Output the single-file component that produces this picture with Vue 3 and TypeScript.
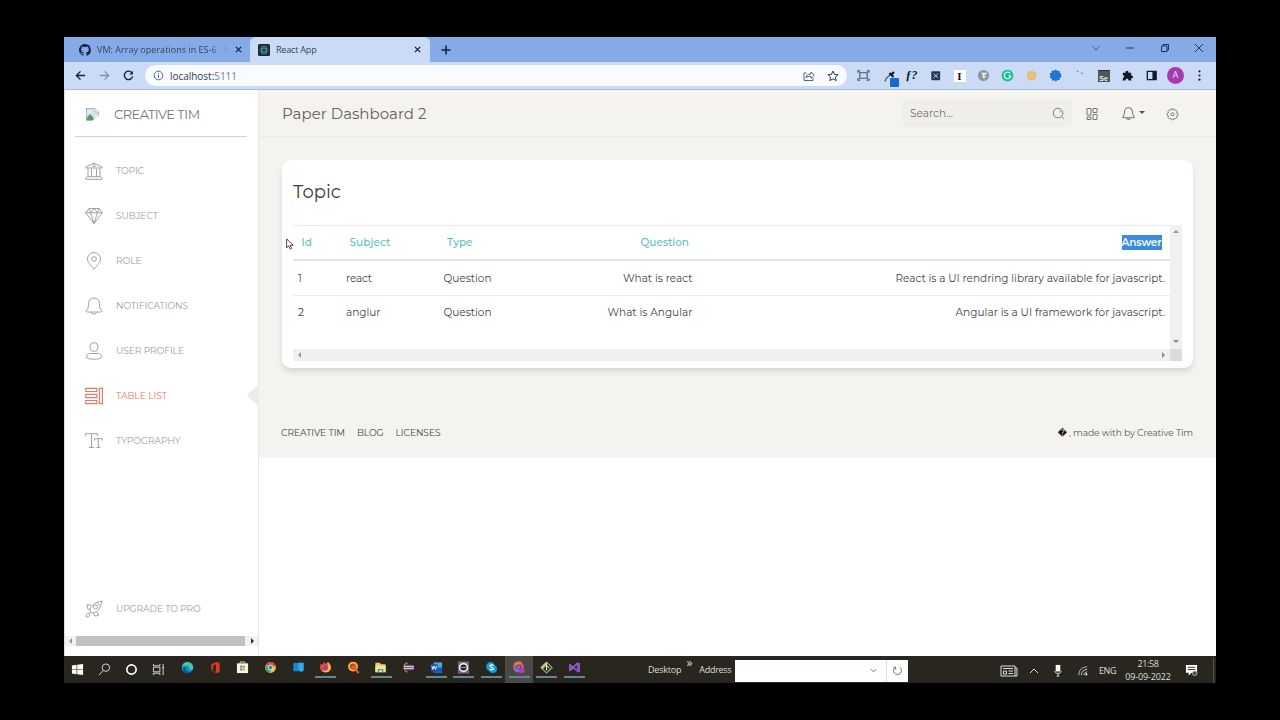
<script setup lang="ts">
interface NavItem {
  label: string
  width: number
  path: string
  active?: boolean
}

interface Topic {
  id: number
  subject: string
  subjectWidth: number
  type: string
  question: string
  questionWidth: number
  answer: string
  answerWidth: number
}

// Tracks a label in or out so that it occupies the given width.
const vFit = {
  mounted(el: HTMLElement, binding: { value: number }) {
    const count = (el.textContent ?? '').trim().length
    const natural = el.getBoundingClientRect().width
    if (count > 0) el.style.letterSpacing = `${(binding.value - natural) / count}px`
  },
}

const navItems: NavItem[] = [
  { label: 'TOPIC', width: 28, path: 'M1 6V5l8-4 8 4v1H1zM3 6.500v8M6.500 7v7.500M11.500 7v7.500M15 6.500v8M2 14.700h14M1 15v2.300h16V15M10.200 3.800a1.200 1.200 0 1 1-2.400 0 1.200 1.200 0 0 1 2.400 0' },
  { label: 'SUBJECT', width: 42, path: 'M4 1.500h10l3.300 4.300L9 16.500.7 5.800zM.7 5.800h16.600M4 1.500l1.500 4.300L9 1.500l3.500 4.300L14 1.500M5.500 5.800L9 16.500l3.500-10.700' },
  { label: 'ROLE', width: 25.5, path: 'M9 17C5 12.500 2.500 10 2.500 7a6.500 6.500 0 0 1 13 0c0 3-2.500 5.500-6.500 10zM11.300 7a2.300 2.300 0 1 1-4.600 0 2.300 2.300 0 0 1 4.600 0' },
  { label: 'NOTIFICATIONS', width: 72, path: 'M1.200 13.500C3.500 11.500 3.500 10 3.500 6.500a5.500 5.500 0 0 1 11 0c0 3.500 0 5 2.300 7 .5 1-.5 1.500-1.800 1.500H3c-1.300 0-2.300-.5-1.800-1.500zM6.500 15c.3 3 4.700 3 5 0' },
  { label: 'USER PROFILE', width: 68, path: 'M13 5a4 4.200 0 1 1-8 0 4 4.200 0 0 1 8 0M4.500 11.500h9c1.800 0 3 1.800 3 3.500 0 3-15 3-15 0 0-1.700 1.200-3.500 3-3.500z' },
  { label: 'TABLE LIST', width: 51, active: true, path: 'M.8 1.300h11v3.200h-11zM.8 7.400h11v3.200h-11zM.8 13.500h11v3.200h-11zM14.400 1.300h3v15.400h-3z' },
  { label: 'TYPOGRAPHY', width: 64.5, path: 'M.7 4V1.700h11.600V4M6.500 1.700v13.600M4 15.500h5M9.500 8.500V6.700h7.800v1.800M13.400 6.700v8.600M11.500 15.500h3.800' },
]

const rocket = 'M5.500 12.500C3 7 10 2 17 1c-1 7-6 14-11.500 11.500zM12.500 7a2 2 0 1 1-4 0 2 2 0 0 1 4 0M6 5.500L2.500 4.500 2 8l3 2M12.500 12l1 3.500-3.500.5-2-3M12 2.500L15.500 6M4.500 13c-3-.5-3.500 1.500-3.500 4 2.500 0 4.500-.5 3.500-4'

const topics: Topic[] = [
  { id: 1, subject: 'react', subjectWidth: 26, type: 'Question', question: 'What is react', questionWidth: 69.5, answer: 'React is a UI rendring library available for javascript.', answerWidth: 269.5 },
  { id: 2, subject: 'anglur', subjectWidth: 34.5, type: 'Question', question: 'What is Angular', questionWidth: 85, answer: 'Angular is a UI framework for javascript.', answerWidth: 209.5 },
]
</script>

<template>
  <div class="screen">
    <div class="desktop">
      <header class="tabs">
        <div class="tab idle">
          <svg class="i12" viewBox="0 0 16 16"><path fill="#14233c" fill-rule="evenodd" d="M8 0C3.600 0 0 3.600 0 8c0 3.500 2.300 6.500 5.500 7.600.4.100.5-.2.500-.4v-1.500c-2 .4-2.600-.5-2.800-1-.1-.2-.5-1-.8-1.200-.3-.1-.7-.5 0-.5s1 .6 1.200.8c.7 1.200 1.900.9 2.400.7.1-.5.300-.9.500-1.100-1.800-.2-3.600-.9-3.600-4 0-.9.300-1.600.8-2.100-.1-.2-.4-1 .1-2.100 0 0 .7-.2 2.200.8a7.500 7.500 0 0 1 4 0c1.500-1 2.200-.8 2.200-.8.400 1.100.2 1.900.1 2.100.5.600.8 1.300.8 2.100 0 3.100-1.900 3.800-3.700 4 .3.200.6.700.6 1.500v2.200c0 .2.100.5.500.4A8 8 0 0 0 8 0z" /></svg>
          <span class="tab-title faded"><span v-fit="138">VM: Array operations in ES-6 · Iss</span></span>
          <svg class="close" viewBox="0 0 8 8"><path d="M1 1l6 6M7 1L1 7" /></svg>
        </div>
        <div class="tab current">
          <svg class="i12" viewBox="0 0 12 12"><rect width="12" height="12" rx="1.500" fill="#122b36" /><g fill="none" stroke="#63a9a9" stroke-width=".6"><ellipse cx="6" cy="6" rx="4.500" ry="1.800" /><ellipse cx="6" cy="6" rx="4.500" ry="1.800" transform="rotate(60 6 6)" /><ellipse cx="6" cy="6" rx="4.500" ry="1.800" transform="rotate(120 6 6)" /></g></svg>
          <span class="tab-title"><span v-fit="40.5">React App</span></span>
          <svg class="close" viewBox="0 0 8 8"><path d="M1 1l6 6M7 1L1 7" /></svg>
        </div>
        <svg class="new-tab" viewBox="0 0 10 10"><path d="M5 .5v9M.5 5h9" /></svg>
        <div class="window-buttons">
          <svg viewBox="0 0 10 10"><path d="M1.500 3L5 7l3.500-4" stroke="#45639c" /></svg>
          <svg viewBox="0 0 10 10"><path d="M1 5h8" /></svg>
          <svg viewBox="0 0 10 10"><path d="M1.500 3h5.500v5.500H1.500zM3 3V1.500h5.500V7H7" /></svg>
          <svg viewBox="0 0 10 10"><path d="M1 1l8 8M9 1L1 9" /></svg>
        </div>
      </header>

      <div class="toolbar">
        <div class="nav-buttons">
          <svg viewBox="0 0 12 12"><path d="M11 6H1.500M6 1.500L1.500 6 6 10.500" /></svg>
          <svg class="dim" viewBox="0 0 12 12"><path d="M1 6h9.500M6 1.500L10.500 6 6 10.500" /></svg>
          <svg viewBox="0 0 12 12"><path d="M10 3.500A4.600 4.600 0 1 0 10.500 7" /><path d="M10.800 1v4H6.800z" fill="#14233c" stroke="none" /></svg>
        </div>
        <div class="omnibox">
          <svg class="info" viewBox="0 0 12 12"><circle cx="6" cy="6" r="4.700" /><path d="M6 5.300v3.200M6 3.200v1" /></svg>
          <span class="url" v-fit="67">localhost:<i>5111</i></span>
          <svg class="omni-icon push" viewBox="0 0 12 12"><path d="M3.500 3H1v7.500h9V8M3 8c.3-3 2-4 5-4V2l3.300 3.200L8 8.300V6.300C5.500 6.200 4 6.800 3 8z" /></svg>
          <svg class="omni-icon star" viewBox="0 0 12 12"><path d="M6 1l1.500 3.300 3.600.4-2.700 2.400.8 3.500L6 8.800l-3.200 1.800.8-3.500L.9 4.700l3.600-.4z" /></svg>
        </div>
        <div class="extensions">
          <span><svg viewBox="0 0 14 14"><path d="M3 4h8v6H3zM1 4V2h2.500M13 4V2h-2.500M1 10v2h2.500M13 10v2h-2.500" fill="none" stroke="#43536c" stroke-width="1.200" /></svg></span>
          <span><svg class="picker" viewBox="0 0 16 18"><path d="M2 12.500l.8-2.500 4.500-4.500" fill="none" stroke="#50627f" stroke-width="1.400" /><path d="M6.500 4l4 4M8.500 5.500L11 3" fill="none" stroke="#101a2b" stroke-width="2.200" /><rect x="7" y="9" width="9" height="9" rx="1" fill="#1668d3" /></svg></span>
          <span class="fx">ƒ?</span>
          <span><svg viewBox="0 0 14 14"><rect x="2.500" y="2.500" width="9.500" height="9.500" rx="1" fill="#24384e" /><path d="M5 5l4.500 4.500M9.500 5L5 9.500" stroke="#dce6f7" /></svg></span>
          <span class="letter-i">I</span>
          <span><svg viewBox="0 0 14 14"><circle cx="7" cy="7" r="6" fill="#8e949e" /><path d="M4 4h7l-1 2H8v1.500h2L9 9H8v2L6 9V6z" fill="#eee" /></svg></span>
          <span><svg viewBox="0 0 14 14"><circle cx="7" cy="7" r="6.300" fill="#15c28f" /><path d="M9.800 4.800A3.500 3.500 0 1 0 10.500 7.500H8" fill="none" stroke="#e9fff8" stroke-width="1.300" /></svg></span>
          <span><svg viewBox="0 0 14 14"><circle cx="7" cy="7" r="4.600" fill="#edb65b" stroke="#edb65b" stroke-width="1.500" stroke-dasharray="2 1.500" /><circle cx="7" cy="7" r="2" fill="none" stroke="#cddcf3" /></svg></span>
          <span><svg viewBox="0 0 14 14"><circle cx="7" cy="7" r="5.500" fill="#1679dd" stroke="#30659e" stroke-width="1.500" stroke-dasharray="2 1.500" /></svg></span>
          <span><svg viewBox="0 0 14 14"><circle cx="5" cy="2.500" r="1" fill="#838fa8" /><circle cx="9.500" cy="4.500" r="1" fill="#838fa8" /></svg></span>
          <span class="se"><b>Se</b></span>
          <span><svg viewBox="0 0 14 14"><path d="M2 4h3c-1-3 4-3 3 0h3v3c2.500-.5 2.500 3.500 0 3v2.500H8c.5-2.500-3.500-2.500-3 0H2V9.500c2-.2 2-2.800 0-2.700z" fill="#101a2b" /></svg></span>
          <span><svg viewBox="0 0 14 14"><path d="M2.500 2.500h9.500v9H2.500z" fill="none" stroke="#101a2b" stroke-width="1.400" /><path d="M8 2.500h4v9H8z" fill="#101a2b" /></svg></span>
          <span class="avatar"><b>A</b></span>
          <span><svg viewBox="0 0 14 14" fill="#14233c"><circle cx="7" cy="2.500" r="1.200" /><circle cx="7" cy="7" r="1.200" /><circle cx="7" cy="11.500" r="1.200" /></svg></span>
        </div>
      </div>

      <div class="page">
        <aside class="sidebar">
          <div class="brand">
            <svg viewBox="0 0 13 13"><path d="M.5.500H9L12.500 4v8.500H.5z" fill="#d3e5f4" stroke="#93a2a8" stroke-width=".8" /><path d="M1 12V9.500L4 6l3 3 1 3z" fill="#5c9b5b" /><path d="M9 .500V4h3.500" fill="#fff" stroke="#93a2a8" stroke-width=".6" /><path d="M6 13l7-6v6z" fill="#fff" /><circle cx="4" cy="3.800" r="1" fill="#fff" /></svg>
            <span v-fit="85.5">CREATIVE TIM</span>
          </div>
          <nav>
            <a v-for="item in navItems" :key="item.label" :class="{ active: item.active }">
              <svg viewBox="0 0 18 18"><path :d="item.path" /></svg>
              <span v-fit="item.width">{{ item.label }}</span>
            </a>
          </nav>
          <a class="upgrade">
            <svg viewBox="0 0 18 18"><path :d="rocket" /></svg>
            <span v-fit="84.5">UPGRADE TO PRO</span>
          </a>
          <div class="side-scroll"><i class="arrow left"></i><b></b><i class="arrow right dark"></i></div>
        </aside>

        <main>
          <div class="navbar">
            <h1><span v-fit="144.5">Paper Dashboard 2</span></h1>
            <div class="search">
              <span v-fit="43">Search...</span>
              <svg viewBox="0 0 14 14"><circle cx="6.500" cy="6.500" r="5.200" /><path d="M10.300 10.300l2.500 2.500M8 3.800a3 3 0 0 1 1.300 2" /></svg>
            </div>
            <svg class="grid-icon" viewBox="0 0 12 12"><path d="M1 .5h4v6.500H1zM7 .5h4v4H7zM7 6.500h4v5H7zM1 9h4v2.500H1z" /></svg>
            <svg class="bell" viewBox="0 0 18 18"><path :d="navItems[3].path" /></svg>
            <i class="caret"></i>
            <svg class="gear" viewBox="0 0 14 14"><path d="M5.800 1h2.400l.5 1.500 1.500-.7 1.700 1.700-.7 1.500 1.600.6v2.400l-1.600.6.7 1.500-1.700 1.700-1.500-.7-.5 1.500H5.800l-.5-1.500-1.500.7-1.700-1.700.7-1.500L1.200 8V5.600L2.800 5l-.7-1.500 1.700-1.700 1.500.7z" /><circle cx="7" cy="6.800" r="1.700" /></svg>
          </div>

          <section class="card">
            <h2><span v-fit="48">Topic</span></h2>
            <div class="table-box">
              <div class="table">
                <div class="row head">
                  <span><em v-fit="10.5">Id</em></span>
                  <span><em v-fit="41">Subject</em></span>
                  <span><em v-fit="25.5">Type</em></span>
                  <span class="end"><em v-fit="48.5">Question</em></span>
                  <span class="end"><em class="selected" v-fit="40">Answer</em></span>
                </div>
                <div v-for="topic in topics" :key="topic.id" class="row">
                  <span>{{ topic.id }}</span>
                  <span><em v-fit="topic.subjectWidth">{{ topic.subject }}</em></span>
                  <span><em v-fit="48">{{ topic.type }}</em></span>
                  <span class="end"><em v-fit="topic.questionWidth">{{ topic.question }}</em></span>
                  <span class="end"><em v-fit="topic.answerWidth">{{ topic.answer }}</em></span>
                </div>
              </div>
              <div class="scroll-y"><i class="arrow up"></i><i class="arrow down"></i></div>
              <div class="scroll-x"><i class="arrow left"></i><i class="arrow right"></i></div>
              <div class="corner"></div>
            </div>
          </section>

          <footer>
            <span v-fit="64">CREATIVE TIM</span>
            <span v-fit="26.5">BLOG</span>
            <span v-fit="45">LICENSES</span>
            <span class="credit"><span class="unknown">�</span><span v-fit="124">, made with by Creative Tim</span></span>
          </footer>
        </main>
      </div>

      <div class="taskbar">
        <div class="system">
          <span><svg viewBox="0 0 14 14" fill="#fff"><path d="M1 2.800l5-.8v4.700H1zM6.700 1.900L13 1v5.700H6.700zM1 7.300h5V12l-5-.8zM6.700 7.300H13V13l-6.300-.9z" /></svg></span>
          <span><svg viewBox="0 0 14 14" fill="none" stroke="#ddd"><circle cx="8.500" cy="5" r="4" /><path d="M5.700 8L1 13" /></svg></span>
          <span><svg viewBox="0 0 14 14" fill="none" stroke="#fff" stroke-width="1.800"><circle cx="7" cy="7" r="5" /></svg></span>
          <span><svg viewBox="0 0 14 14" fill="none" stroke="#ddd"><path d="M1.500 1v2h7V1M1.500 4.500h7v5h-7zM1.500 13v-2h7v2M12 1v12M11 5h2" /></svg></span>
        </div>
        <div class="apps">
          <span><svg viewBox="0 0 14 14"><circle cx="7" cy="7" r="6.200" fill="#178bd0" /><path d="M1 6a6.200 6.200 0 0 1 12.200 1c0 2.500-3 3-4.500 1.800 1-2-1-4-3-3.700C3 5.200 1.500 6 1 6z" fill="#45cb9b" /><path d="M5 7c-1 3 2 5 6 4.500-4 3.500-9 1-9-2.500C2 7 3.500 6 5 7z" fill="#095998" /></svg></span>
          <span><svg viewBox="0 0 14 14"><path d="M2.500 3.500L8 1l3.500 1v10L8 13l-5.500-2 5 .5v-8L4.500 5v4.500l-2 1z" fill="#d83b17" /></svg></span>
          <span><svg viewBox="0 0 14 14"><path d="M1 2.500h12v10.500H1z" fill="#f5f3e8" /><path d="M4.500 2.500V1h5v1.500" fill="none" stroke="#ddd" /><path d="M4.500 5h2.200v2.200H4.500z" fill="#d95a34" /><path d="M7.300 5h2.200v2.200H7.300z" fill="#74a83a" /><path d="M4.500 8h2.200v2.200H4.500z" fill="#278dcc" /><path d="M7.300 8h2.200v2.200H7.300z" fill="#dca62c" /></svg></span>
          <span><svg viewBox="0 0 14 14"><circle cx="7" cy="7" r="5.800" fill="#e6bf36" /><path d="M7 7L2 4a5.800 5.800 0 0 1 10.500 1z" fill="#df4b38" /><path d="M2 4a5.800 5.800 0 0 0 4 8.700L8 9 5 7z" fill="#41a45a" /><circle cx="7" cy="7" r="2.600" fill="#3e82dc" stroke="#fff" stroke-width=".8" /></svg></span>
          <span><svg viewBox="0 0 14 14"><path d="M1.500 2h11v9h-11z" fill="#1687d3" /><path d="M7 2h5.500v7L10 12 7 9z" fill="#35a8ee" /></svg></span>
          <span class="open"><svg viewBox="0 0 14 14"><path d="M2 3l2 1 1-3 2 2 3-2c3 2 4 6 2 9-3 4-9 3-10.500-1C1 7 1 5 2 3z" fill="#f5492f" /><path d="M9 1c4 3 5 7 2 10-3 2-7 1-8-1 4 1 8-1 6-9z" fill="#ffb72e" /><circle cx="7" cy="7.500" r="2.700" fill="#9c43b2" /></svg></span>
          <span><svg viewBox="0 0 14 14"><circle cx="6.500" cy="6" r="4.300" fill="#bf392a" stroke="#f4bd2d" stroke-width="2" /><path d="M6 5l6.500 8M5 8l4-4" stroke="#f1563b" stroke-width="2.200" /></svg></span>
          <span class="open"><svg viewBox="0 0 14 14"><path d="M1.500 2h5l1 1.500h5V12h-11z" fill="#e7cd67" /><path d="M1.500 5h11v7h-11z" fill="#f7e49a" /><path d="M4 12V8.500h6V12H8.500v-2h-3v2z" fill="#459cb8" /></svg></span>
          <span><svg viewBox="0 0 14 14"><path d="M6 2a5.200 5.200 0 0 0 0 10" fill="none" stroke="#d78548" stroke-width="1.200" /><rect x="3" y="4" width="10" height="6" rx="2.500" fill="#6a5689" /><path d="M2 6h11M2 8h11" stroke="#e1d6ef" /></svg></span>
          <span class="open"><svg viewBox="0 0 14 14"><path d="M4 1.500h9v11H4z" fill="#54a6e7" /><path d="M4 7h9v5.500H4z" fill="#175cac" /><path d="M.8 3.500h7.500v7.500H.8z" fill="#1759ae" /><path d="M2 5.500l1 3.500 1.500-3.500L6 9l1-3.500" fill="none" stroke="#fff" /></svg></span>
          <span class="open"><svg viewBox="0 0 14 14"><path d="M1 .5h12v13H1z" fill="#726b80" /><circle cx="7" cy="7" r="4.200" fill="#29232f" stroke="#eee7f4" stroke-width="1.800" /><path d="M4.500 7h5" stroke="#aaa2b3" /></svg></span>
          <span class="open"><svg viewBox="0 0 14 14"><circle cx="6" cy="6" r="4.800" fill="#179fdc" /><circle cx="8.500" cy="8.500" r="4.300" fill="#179fdc" /><path d="M9 5C8 3.500 5 4 5.500 5.800 6 7 9 6.800 9 8.500 8.500 10 5.500 10 5 8.500" fill="none" stroke="#fff" stroke-width="1.300" /></svg></span>
          <span class="open focus"><svg viewBox="0 0 14 14"><circle cx="7" cy="6.500" r="4.300" fill="none" stroke="#d94b82" stroke-width="3" /><path d="M3 5a4.300 4.300 0 0 1 7-2" fill="none" stroke="#e97641" stroke-width="3" /><path d="M3 7a4.300 4.300 0 0 0 4 4" fill="none" stroke="#8d68cc" stroke-width="3" /><circle cx="7" cy="6.500" r="2" fill="#5183dd" /><circle cx="11" cy="10.500" r="2.800" fill="#ad3bbc" /></svg></span>
          <span class="open"><svg viewBox="0 0 14 14"><path d="M7 1l6 6-6 6-6-6z" fill="#2f3b30" stroke="#e5e4cc" /><path d="M7 1L1 7l2 2 5-6z" fill="#d9c96b" /><path d="M7 3.500V10M7 5l3 2.500" stroke="#fff" /><path d="M9 11l4-4" stroke="#77a55c" stroke-width="1.500" /></svg></span>
          <span class="open"><svg viewBox="0 0 14 14"><path d="M2 4.500v5L5 7zM1.500 3.500L11 11.500M10.500 2L2 10.500" fill="none" stroke="#9260d0" stroke-width="1.600" /><path d="M9.500 1.500l3.500 1v9l-3.500 1z" fill="#8554c5" /></svg></span>
        </div>
        <span class="desk" v-fit="33.5">Desktop</span>
        <span class="more">»</span>
        <span class="address" v-fit="32">Address</span>
        <div class="address-box">
          <svg viewBox="0 0 10 10"><path d="M2 3.500l3 3 3-3" /></svg>
          <div class="refresh"><svg viewBox="0 0 12 12"><path d="M3.500 2.500a4.300 4.300 0 1 0 5 0M4 5V2.300H1.500" /></svg></div>
        </div>
        <div class="tray">
          <svg class="news" viewBox="0 0 18 12"><path d="M1 1h14v10H1zM15 3h2v8h-2M3 3.500h10M3.500 6h3v3h-3zM8.500 6H13M8.500 8.500H13" /></svg>
          <svg class="chev" viewBox="0 0 10 10"><path d="M1 7l4-4 4 4" /></svg>
          <svg class="mic" viewBox="0 0 10 14"><path d="M2.500 1h5v7h-5z" fill="#fff" stroke="none" /><path d="M1.500 7.500c0 3.500 7 3.500 7 0M5 10v3M3.500 13h3" /></svg>
          <svg class="wifi" viewBox="0 0 12 12"><path d="M1 11C1 5 5 1 11 1M4 11c0-4 3-7 7-7M7 11c0-2 2-4 4-4" /><circle cx="10" cy="10" r="1" fill="#ddd" /></svg>
          <span class="lang" v-fit="17">ENG</span>
          <div class="clock"><span v-fit="21">21:58</span><span v-fit="45.5">09-09-2022</span></div>
          <svg class="note" viewBox="0 0 14 14"><path d="M1 1h12v8.500H7L4 12.500v-3H1z" fill="#fff" stroke="none" /><path d="M3 3.500h8M3 6h8" stroke="#28261f" /><circle cx="10.500" cy="10" r="2.500" fill="#4b4944" stroke="#ddd" stroke-width=".7" /></svg>
          <i class="show-desktop"></i>
        </div>
      </div>

      <svg class="pointer" viewBox="0 0 9 13"><path d="M.7.800v10l2.400-2.300 1.600 3.700 1.700-.8-1.600-3.500h3.300z" /></svg>
    </div>
  </div>
</template>

<style>
body {
  background: #000;
}
</style>

<style scoped>
* {
  box-sizing: border-box;
}
.screen {
  width: 1280px;
  height: 720px;
  padding: 37px 64px;
  background: #000;
  overflow: hidden;
  font-family: Montserrat, Inter, sans-serif;
}
.desktop {
  position: relative;
  width: 1152px;
  height: 646px;
  background: #fff;
  display: flex;
  flex-direction: column;
}
span, em {
  white-space: nowrap;
}
em, i {
  font-style: normal;
}
svg {
  display: block;
  flex: none;
}

.tabs {
  height: 25px;
  display: flex;
  align-items: center;
  background: #84abe8;
  font-family: "Open Sans", "Noto Sans", sans-serif;
  font-size: 9px;
  color: #34445f;
}
.tab {
  height: 25px;
  display: flex;
  align-items: center;
}
.idle {
  width: 186px;
  padding-left: 15px;
}
.current {
  width: 180px;
  padding-left: 8px;
  background: #ccdbf5;
  border-radius: 6px 6px 0 0;
}
.i12 {
  width: 12px;
  height: 12px;
}
.tab-title {
  width: 136px;
  margin: -1px 0 0 6px;
  overflow: hidden;
}
.idle .tab-title {
  width: 134px;
}
.faded {
  mask-image: linear-gradient(90deg, #000 82%, transparent);
}
.close {
  width: 7px;
  height: 7px;
  margin-left: 4px;
  fill: none;
  stroke: #14233c;
  stroke-width: 1.5;
}
.current .close {
  margin-left: 2px;
}
.new-tab {
  width: 10px;
  height: 10px;
  margin-left: 11px;
  fill: none;
  stroke: #14233c;
  stroke-width: 1.6;
}
.window-buttons {
  margin: -3px 12px 0 auto;
  display: flex;
  gap: 24.5px;
}
.window-buttons svg {
  width: 10px;
  height: 10px;
  fill: none;
  stroke: #1d355e;
  stroke-width: 1;
}

.toolbar {
  height: 28px;
  display: flex;
  align-items: center;
  background: #ccdbf5;
  border-bottom: 1px solid #a9bcd8;
}
.nav-buttons {
  display: flex;
  gap: 13px;
  padding-left: 11px;
}
.nav-buttons svg {
  width: 11px;
  height: 11px;
  fill: none;
  stroke: #14233c;
  stroke-width: 1.5;
}
.nav-buttons .dim {
  stroke: #8293b1;
}
.omnibox {
  width: 702px;
  height: 21px;
  margin-left: 11px;
  padding: 0 8px;
  display: flex;
  align-items: center;
  border-radius: 11px;
  background: #f8fbff;
}
.info {
  width: 11px;
  height: 11px;
  fill: none;
  stroke: #4d5969;
}
.url {
  margin-left: 6px;
  font: 10px "Open Sans", "Noto Sans", sans-serif;
  color: #333b47;
}
.url i {
  color: #77808d;
}
.omni-icon {
  width: 12px;
  height: 12px;
  fill: none;
  stroke: #5a6677;
}
.push {
  margin-left: auto;
}
.star {
  margin-left: 12px;
  stroke: #2c394b;
}
.extensions {
  display: flex;
  margin-left: 4.5px;
}
.extensions > span {
  width: 24px;
  height: 18px;
  display: flex;
  align-items: center;
  justify-content: center;
}
.extensions svg {
  width: 13px;
  height: 13px;
}
.extensions .picker {
  width: 16px;
  height: 18px;
  margin: 4px 0 0 6px;
}
.extensions .fx {
  font: italic bold 12px "Liberation Serif", serif;
  color: #101a2b;
}
.extensions .letter-i {
  width: 12px;
  height: 12px;
  margin: 3px 6px;
  background: #fff;
  font: bold 11px "Liberation Serif", serif;
  color: #111;
}
.se b {
  width: 12px;
  height: 12px;
  padding-top: 4px;
  background: #4f565d;
  color: #eee;
  font: bold 7px/8px "Liberation Sans", sans-serif;
  text-align: center;
  border-top: 1px solid #29313b;
}
.avatar b {
  width: 17px;
  height: 17px;
  flex: none;
  border-radius: 50%;
  background: #a43cb0;
  color: #f2dff5;
  font: 9px/17px Roboto, sans-serif;
  text-align: center;
}

.page {
  height: 566px;
  display: flex;
}
.sidebar {
  position: relative;
  width: 195px;
  display: flex;
  flex-direction: column;
  border-right: 1px solid #e6e5e2;
  border-left: 1px solid #ddd;
}
.brand {
  height: 47px;
  margin: 0 11px 0 10px;
  padding: 2px 0 0 11px;
  display: flex;
  align-items: center;
  gap: 15px;
  border-bottom: 1px solid #d5d3d0;
  color: #7a756f;
  font-size: 13px;
  font-weight: 400;
}
.brand svg {
  width: 13px;
  height: 13px;
}
nav {
  padding-top: 11px;
}
nav a, .upgrade {
  position: relative;
  height: 45px;
  padding-left: 20px;
  display: flex;
  align-items: center;
  gap: 13px;
  color: #a0a0a0;
  font-size: 9.2px;
  font-weight: 400;
}
nav a svg, .upgrade svg {
  width: 18px;
  height: 18px;
  fill: none;
  stroke: currentColor;
  stroke-width: 1;
}
nav .active {
  color: #dc8069;
}
nav .active svg {
  stroke-width: 1.2;
}
nav .active::after {
  content: "";
  position: absolute;
  right: -1px;
  top: 11px;
  width: 12px;
  height: 23px;
  background: #eeece8;
  clip-path: polygon(100% 0, 0 50%, 100% 100%);
}
.upgrade {
  margin-top: 123px;
}
.side-scroll {
  height: 10px;
  margin-top: 5px;
  display: flex;
  align-items: center;
  justify-content: space-between;
  padding: 0 4px;
  background: #f1f1f1;
}
.side-scroll b {
  width: 169px;
  height: 10px;
  margin-right: 2px;
  background: #c1c1c1;
}
.arrow {
  width: 0;
  height: 0;
  border: 3px solid transparent;
}
.left {
  border-right: 3px solid #999;
  border-left: 0;
}
.right {
  border-left: 3px solid #888;
  border-right: 0;
}
.dark {
  border-left-color: #333;
}
.up {
  border-bottom: 3px solid #999;
  border-top: 0;
}
.down {
  border-top: 3px solid #888;
  border-bottom: 0;
}

main {
  width: 957px;
  height: 368px;
  background: #f4f3ef;
}
.navbar {
  height: 47px;
  display: flex;
  align-items: center;
  border-bottom: 1px solid #eceae5;
  padding: 1px 0 0 23px;
}
h1, h2 {
  margin: 0;
}
h1 {
  flex: 1;
  font-size: 15px;
  font-weight: 400;
  color: #66615b;
}
.search {
  width: 169px;
  height: 27px;
  display: flex;
  align-items: center;
  justify-content: space-between;
  padding: 0 7px;
  background: #efeeeb;
  border-radius: 3px;
  font-size: 10.5px;
  color: #76716b;
}
.navbar svg {
  fill: none;
  stroke: #7b7771;
  stroke-width: 1;
  width: 13px;
  height: 13px;
}
.navbar .grid-icon {
  width: 12px;
  height: 12px;
  margin-left: 14px;
}
.navbar .bell {
  margin-left: 24px;
  stroke-width: 1.4;
}
.caret {
  margin: -3px 0 0 4px;
  border: 3px solid transparent;
  border-top-color: #55514b;
  border-bottom: 0;
}
.navbar .gear {
  margin: 1px 37px 0 21px;
}

.card {
  width: 911px;
  height: 208px;
  margin: 23px 0 0 23px;
  padding: 0 11px;
  background: #fff;
  border-radius: 9px;
  box-shadow: 0 4px 6px -1px rgba(0, 0, 0, 0.14);
}
h2 {
  height: 65px;
  padding-top: 20px;
  font-size: 18px;
  line-height: 24px;
  font-weight: 400;
  color: #3b3b3b;
}
.table-box {
  display: grid;
  grid-template: 124px 12px / 877px 12px;
}
.table {
  border-top: 1px solid #ebebeb;
  font-size: 10.5px;
  color: #444;
}
.row {
  height: 34px;
  display: grid;
  grid-template-columns: 48px 97.5px 110.5px 148.5px 472.5px;
  align-items: center;
}
.row > span {
  padding: 0 5px;
}
.row + .row + .row {
  border-top: 1px solid #ebebeb;
}
.head {
  height: 35px;
  border-bottom: 2px solid #e2e2e2;
  color: #5bc4bb;
  font-weight: 500;
}
.head > span {
  padding: 0 8.500px;
}
.row .end {
  text-align: right;
}
.head em {
  display: inline-block;
}
.selected {
  background: #3d8bdc;
  color: #f0faff;
  line-height: 15px;
  font-weight: 600;
}
.scroll-y, .scroll-x {
  display: flex;
  align-items: center;
  justify-content: space-between;
  background: #f0f0f0;
}
.scroll-y {
  flex-direction: column;
  padding: 5px 0 6px;
}
.scroll-x {
  padding: 0 5px;
}
.corner {
  background: #dcdcdc;
}
footer {
  margin: 58px 23px 0 22px;
  display: flex;
  align-items: center;
  gap: 12px;
  font-size: 9.2px;
  line-height: 14px;
  color: #4a4843;
}
.credit {
  display: flex;
  gap: 2px;
  margin-left: auto;
  color: #5d5b56;
}
.unknown {
  font-family: "DejaVu Sans", sans-serif;
  font-size: 9px;
  color: #111;
}

.taskbar {
  height: 27px;
  display: flex;
  align-items: center;
  background: #28261f;
  color: #ddd;
  font: 9px "Open Sans", "Noto Sans", sans-serif;
}
.system, .apps {
  height: 27px;
  display: flex;
}
.system span {
  width: 27px;
  padding-top: 7px;
}
.taskbar .system svg, .taskbar .apps svg {
  width: 13px;
  height: 13px;
  margin: 0 auto;
}
.apps {
  margin-left: 2px;
}
.apps span {
  width: 27.6px;
  padding-top: 5px;
  position: relative;
}
.apps .open::after {
  content: "";
  position: absolute;
  left: 3.5px;
  bottom: 5px;
  width: 21px;
  height: 2px;
  background: #5f8796;
}
.apps .focus {
  background: #4a4944;
}
.desk {
  margin-left: 60px;
}
.more {
  margin: -15px 0 0 5px;
  font-size: 12px;
}
.address {
  margin-left: 7px;
}
.address-box {
  width: 173px;
  height: 22px;
  margin: 2px 0 0 4px;
  display: flex;
  align-items: center;
  justify-content: flex-end;
  background: #fff;
}
.address-box svg {
  width: 9px;
  height: 9px;
  fill: none;
  stroke: #666;
  margin-right: 8px;
}
.address-box .refresh {
  width: 22px;
  height: 22px;
  display: flex;
  align-items: center;
  justify-content: center;
  border-left: 1px solid #ddd;
}
.refresh svg {
  width: 11px;
  height: 11px;
  margin: 0;
}
.tray {
  margin-left: auto;
  display: flex;
  align-items: center;
  height: 27px;
  padding: 2px 2px 0 0;
}
.tray svg {
  fill: none;
  stroke: #ddd;
}
.news {
  width: 18px;
  height: 12px;
}
.chev {
  width: 10px;
  height: 10px;
  margin-left: 11px;
}
.mic {
  width: 10px;
  height: 13px;
  margin-left: 14px;
}
.wifi {
  width: 10px;
  height: 10px;
  margin-left: 15px;
}
.lang {
  margin-left: 11px;
}
.clock {
  width: 48px;
  margin: -1px 0 0 8px;
  display: flex;
  flex-direction: column;
  align-items: center;
  line-height: 13px;
}
.note {
  width: 13px;
  height: 13px;
  margin-left: 13px;
}
.show-desktop {
  width: 1px;
  height: 25px;
  margin-left: 15px;
  background: #55534d;
}
.pointer {
  position: absolute;
  left: 222px;
  top: 201px;
  width: 8px;
  height: 12px;
  fill: #fff;
  stroke: #333;
}
</style>
